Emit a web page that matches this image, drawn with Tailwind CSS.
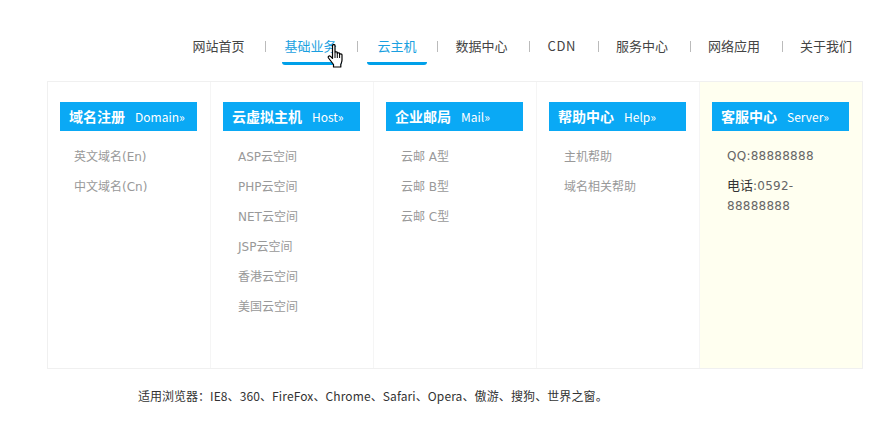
<!DOCTYPE html>
<html>
<head>
    <meta charset="utf-8">
    <title>基础业务</title>
    <script src="https://cdn.jsdelivr.net/npm/@tailwindcss/browser@4"></script>
</head>
<body class="bg-white overflow-hidden font-['Noto_Sans_CJK_SC','Noto_Sans',sans-serif] text-[13px]">

    <!-- menu -->
    <div class="relative flex justify-end items-start h-[81px] pt-[36px] pr-[33px] text-[#444]">
        <a class="px-[10px] h-[29px] leading-[20px]">网站首页</a>
        <span class="ml-[11px] mr-[16px] mt-[5px] w-px h-[11px] bg-[#bbb]"></span>
        <a class="pl-[2px] pr-[6px] h-[29px] leading-[20px] text-[#1a9fe0] border-b-[3px] border-[#00a0e9] rounded-[3px]">基础业务</a>
        <span class="ml-[15px] mr-[9px] mt-[5px] w-px h-[11px] bg-[#bbb]"></span>
        <a class="px-[10px] h-[29px] leading-[20px] text-[#1a9fe0] border-b-[3px] border-[#00a0e9] rounded-[3px]">云主机</a>
        <span class="ml-[10px] mr-[8px] mt-[5px] w-px h-[11px] bg-[#bbb]"></span>
        <a class="px-[10px] h-[29px] leading-[20px]">数据中心</a>
        <span class="ml-[11px] mr-[8px] mt-[5px] w-px h-[11px] bg-[#bbb]"></span>
        <a class="px-[10px] h-[29px] leading-[20px] tracking-[0.6px]">CDN</a>
        <span class="ml-[12px] mr-[7px] mt-[5px] w-px h-[11px] bg-[#bbb]"></span>
        <a class="px-[10px] h-[29px] leading-[20px]">服务中心</a>
        <span class="ml-[12px] mr-[7px] mt-[5px] w-px h-[11px] bg-[#bbb]"></span>
        <a class="px-[10px] h-[29px] leading-[20px]">网络应用</a>
        <span class="ml-[12px] mr-[7px] mt-[5px] w-px h-[11px] bg-[#bbb]"></span>
        <a class="px-[10px] h-[29px] leading-[20px]">关于我们</a>

        <!-- mouse pointer -->
        <svg class="absolute left-[327px] top-[44px]" width="18" height="24" viewBox="0 0 18 24">
            <path d="M5.500 1.500c0-1.300 2.500-1.300 2.500 0V8.500c0-1 2.300-1 2.300 0v1c0-1 2.300-1 2.300 0v1c0-1 2.400-1 2.400 0.200V16c0 2-.8 3-1.200 4.500v2.500H6.500v-2.500L1.500 14c-1-1.500 .8-2.800 2-1.600l2 2z" fill="#fff" stroke="#000" stroke-width="1.200" stroke-linejoin="round"/>
            <path d="M8 9v5M10.300 9.500v4.500M12.600 10.500v3.500" stroke="#000" stroke-width="1" fill="none"/>
        </svg>
    </div>

    <!-- sub menu columns -->
    <div class="flex ml-[47px] w-[816px] h-[288px] border border-[#f0f0f0]">
        <div class="w-[163px] border-r border-[#f5f5f5]">
            <h3 class="flex items-center ml-[12px] mt-[20px] w-[137px] h-[29px] pl-[9px] bg-[#0aa9f5] text-white">
                <b class="text-[14px] font-bold">域名注册</b><span class="ml-[10px] text-[12px] font-normal">Domain»</span>
            </h3>
            <ul class="mt-[11px] pl-[26px] text-[#999] text-[12px] leading-[30px] font-['DejaVu_Sans','Noto_Sans_CJK_SC',sans-serif]">
                <li>英文域名(En)</li>
                <li>中文域名(Cn)</li>
            </ul>
        </div>
        <div class="w-[163px] border-r border-[#f5f5f5]">
            <h3 class="flex items-center ml-[12px] mt-[20px] w-[137px] h-[29px] pl-[9px] bg-[#0aa9f5] text-white">
                <b class="text-[14px] font-bold">云虚拟主机</b><span class="ml-[10px] text-[12px] font-normal">Host»</span>
            </h3>
            <ul class="mt-[11px] pl-[27px] text-[#999] text-[12px] leading-[30px] font-['DejaVu_Sans','Noto_Sans_CJK_SC',sans-serif]">
                <li>ASP云空间</li>
                <li>PHP云空间</li>
                <li>NET云空间</li>
                <li>JSP云空间</li>
                <li>香港云空间</li>
                <li>美国云空间</li>
            </ul>
        </div>
        <div class="w-[163px] border-r border-[#f5f5f5]">
            <h3 class="flex items-center ml-[12px] mt-[20px] w-[137px] h-[29px] pl-[9px] bg-[#0aa9f5] text-white">
                <b class="text-[14px] font-bold">企业邮局</b><span class="ml-[10px] text-[12px] font-normal">Mail»</span>
            </h3>
            <ul class="mt-[11px] pl-[27px] text-[#999] text-[12px] leading-[30px] font-['DejaVu_Sans','Noto_Sans_CJK_SC',sans-serif]">
                <li>云邮 A型</li>
                <li>云邮 B型</li>
                <li>云邮 C型</li>
            </ul>
        </div>
        <div class="w-[163px] border-r border-[#f5f5f5]">
            <h3 class="flex items-center ml-[12px] mt-[20px] w-[137px] h-[29px] pl-[9px] bg-[#0aa9f5] text-white">
                <b class="text-[14px] font-bold">帮助中心</b><span class="ml-[10px] text-[12px] font-normal">Help»</span>
            </h3>
            <ul class="mt-[11px] pl-[27px] text-[#999] text-[12px] leading-[30px] font-['DejaVu_Sans','Noto_Sans_CJK_SC',sans-serif]">
                <li>主机帮助</li>
                <li>域名相关帮助</li>
            </ul>
        </div>
        <div class="w-[162px] bg-[#fffff0]">
            <h3 class="flex items-center ml-[12px] mt-[20px] w-[137px] h-[29px] pl-[9px] bg-[#0aa9f5] text-white">
                <b class="text-[14px] font-bold">客服中心</b><span class="ml-[10px] text-[12px] font-normal">Server»</span>
            </h3>
            <ul class="mt-[10px] pl-[27px] text-[#666] text-[12px] tracking-[0.25px] font-['DejaVu_Sans','Noto_Sans_CJK_SC',sans-serif]">
                <li class="leading-[30px]">QQ:88888888</li>
                <li class="mt-[5px] leading-[20px]"><span class="text-[#333] text-[13px] tracking-normal">电话</span>:0592-<br>88888888</li>
            </ul>
        </div>
    </div>

    <p class="mt-[19px] ml-[138px] text-[12px] leading-[16px] text-[#333]">适用浏览器：<span class="tracking-[0.11px]">IE8、360、FireFox、Chrome、Safari、Opera、傲游、搜狗、世界之窗。</span></p>
</body>
</html>
